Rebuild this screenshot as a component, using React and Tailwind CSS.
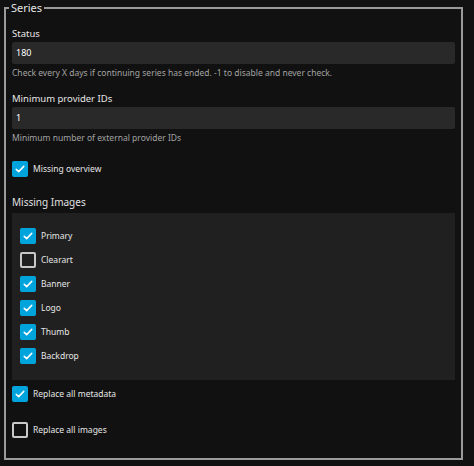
import React from "react";

function Check({ checked, label }) {
  return (
    <label className="flex items-center gap-[5px] h-[16px]">
      <span
        className={
          checked
            ? "flex items-center justify-center w-[16px] h-[16px] rounded-[2px] bg-[#00a4dc]"
            : "flex items-center justify-center w-[16px] h-[16px] rounded-[2px] border-2 border-[#c8c8c8]"
        }
      >
        {checked && (
          <svg viewBox="0 0 16 16" className="w-[12px] h-[12px]" fill="none" stroke="white" strokeWidth="2" strokeLinecap="round" strokeLinejoin="round">
            <path d="M3 8.5l3.2 3L13 4.5" />
          </svg>
        )}
      </span>
      <span className="text-[8.5px] text-[#e6e6e6]">{label}</span>
    </label>
  );
}

function Field({ label, value, desc }) {
  return (
    <div className="flex flex-col">
      <div className="text-[9.5px] leading-[14px] text-[#e6e6e6]">{label}</div>
      <div className="mt-[1px] h-[22px] bg-[#292929] rounded-[2px] flex items-center px-[4px] text-[9px] text-white">
        {value}
      </div>
      <div className="mt-[3px] text-[8.5px] leading-[12px] text-[#a3a3a3]">{desc}</div>
    </div>
  );
}

export default function App() {
  const images = [
    ["Primary", true],
    ["Clearart", false],
    ["Banner", true],
    ["Logo", true],
    ["Thumb", true],
    ["Backdrop", true],
  ];

  return (
    <div className="w-[474px] h-[466px] bg-[#111111] pl-[4px] overflow-hidden" style={{ fontFamily: '"Noto Sans", sans-serif' }}>
      <fieldset className="w-[459px] h-[460px] border-2 border-[#9a9a9a] px-[6px]">
        <legend className="ml-[-3px] px-[2px] text-[11px] leading-[16px] text-[#e6e6e6]">Series</legend>
        <div className="mt-[11px]">
          <Field label="Status" value="180" desc="Check every X days if continuing series has ended. -1 to disable and never check." />
        </div>
        <div className="mt-[13px]">
          <Field label="Minimum provider IDs" value="1" desc="Minimum number of external provider IDs" />
        </div>
        <div className="mt-[17px]">
          <Check checked label="Missing overview" />
        </div>
        <div className="mt-[17px] text-[10px] leading-[16px] text-[#e0e0e0]">Missing Images</div>
        <div className="mt-[3px] h-[167px] bg-[#202020] px-[8px] pt-[15px] flex flex-col gap-[8px]">
          {images.map(([name, on]) => (
            <Check key={name} checked={on} label={name} />
          ))}
        </div>
        <div className="mt-[6px]">
          <Check checked label="Replace all metadata" />
        </div>
        <div className="mt-[20px]">
          <Check checked={false} label="Replace all images" />
        </div>
      </fieldset>
    </div>
  );
}
